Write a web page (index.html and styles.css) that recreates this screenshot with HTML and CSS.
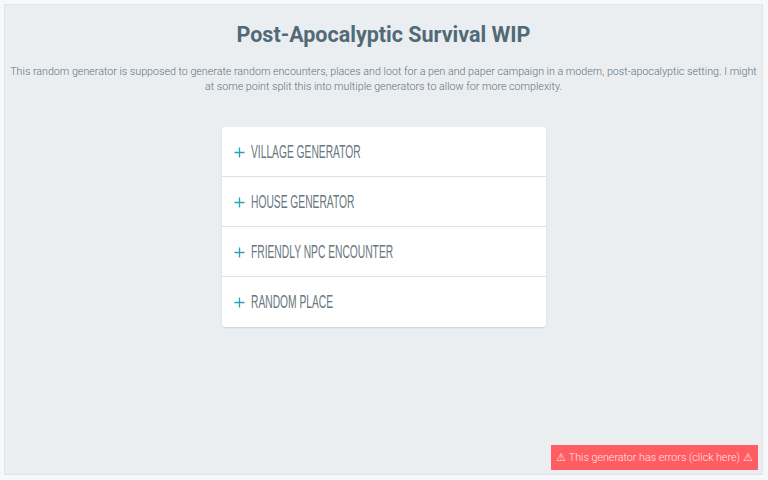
FILE: index.html
```html
<!DOCTYPE html>
<html>
<head>
<meta charset="utf-8">
<link rel="stylesheet" href="styles.css">
</head>
<body>
<div class="frame">
  <div class="page">
    <h1 class="title">Post-Apocalyptic Survival WIP</h1>
    <p class="desc">This random generator is supposed to generate random encounters, places and loot for a pen and paper campaign in a modern, post-apocalyptic setting. I might at some point split this into multiple generators to allow for more complexity.</p>
    <div class="card">
      <div class="row"><svg class="plus" width="11" height="11" viewBox="0 0 11 11"><path d="M5.5 0.5V10.5M0.5 5.5H10.5"/></svg><span class="label">VILLAGE GENERATOR</span></div>
      <div class="row"><svg class="plus" width="11" height="11" viewBox="0 0 11 11"><path d="M5.5 0.5V10.5M0.5 5.5H10.5"/></svg><span class="label">HOUSE GENERATOR</span></div>
      <div class="row"><svg class="plus" width="11" height="11" viewBox="0 0 11 11"><path d="M5.5 0.5V10.5M0.5 5.5H10.5"/></svg><span class="label">FRIENDLY NPC ENCOUNTER</span></div>
      <div class="row"><svg class="plus" width="11" height="11" viewBox="0 0 11 11"><path d="M5.5 0.5V10.5M0.5 5.5H10.5"/></svg><span class="label">RANDOM PLACE</span></div>
    </div>
    <div class="error">⚠ This generator has errors (click here) ⚠</div>
  </div>
</div>
</body>
</html>
```
FILE: styles.css
```css
html, body {
  margin: 0;
  padding: 0;
  background: #f7f8f9;
}
.frame {
  width: 768px;
  height: 480px;
  box-sizing: border-box;
  padding: 4px 5px 5px 4px;
}
.page {
  position: relative;
  height: 100%;
  background: #ebeef1;
  border: 1px solid #e2e5e8;
  box-sizing: border-box;
  font-family: Roboto, "Liberation Sans", sans-serif;
  display: flex;
  flex-direction: column;
  align-items: center;
}
.title {
  margin: 17px 0 0;
  font-size: 21.5px;
  font-weight: 700;
  color: #516a77;
  line-height: 26px;
}
.desc {
  margin: 16px 0 0;
  padding: 0;
  font-size: 10.7px;
  font-weight: 300;
  line-height: 15px;
  color: #5f737e;
  text-align: center;
}
.card {
  margin-top: 33px;
  width: 324px;
  background: #fff;
  border-radius: 3px;
  box-shadow: 0 1px 2px rgba(0,0,0,0.12);
}
.row {
  height: 49px;
  display: flex;
  align-items: center;
  padding-left: 12px;
  border-bottom: 1px solid #dfe2e5;
}
.row:last-child {
  border-bottom: none;
  height: 50px;
}
.plus {
  flex: none;
  stroke: #27a2b6;
  stroke-width: 1.3;
  fill: none;
  margin-right: 6px;
  margin-top: 1px;
}
.label {
  display: inline-block;
  font-family: "Liberation Sans", sans-serif;
  font-size: 19px;
  line-height: 20px;
  color: #68767e;
  white-space: nowrap;
  transform: scaleX(0.54);
  transform-origin: left center;
}
.error {
  position: absolute;
  right: 4px;
  bottom: 4px;
  width: 207px;
  height: 25px;
  line-height: 25px;
  background: #ff5d62;
  color: #ffe4e5;
  font-size: 10.7px;
  font-weight: 300;
  text-align: center;
}
```
